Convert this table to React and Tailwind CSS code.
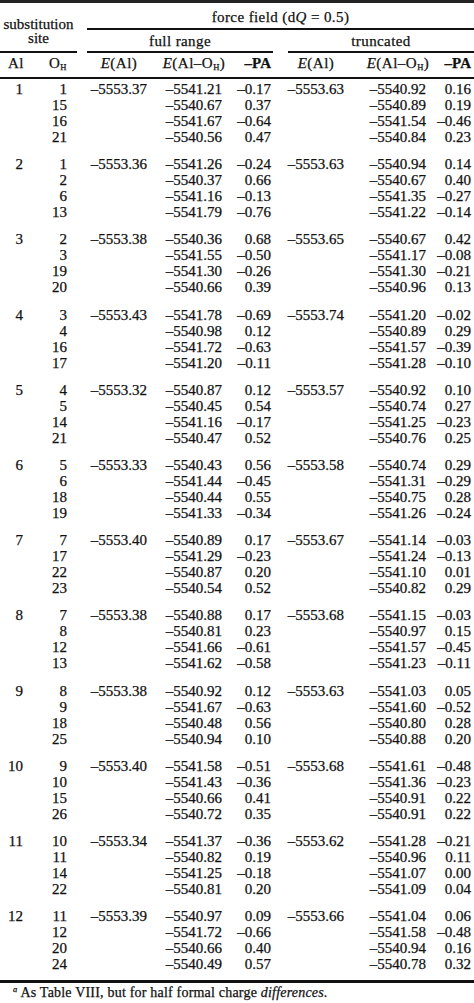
import React from "react";

// Al, E(Al) full, E(Al) truncated, rows: [O_H, E(Al-OH) full, -PA full, E(Al-OH) trunc, -PA trunc]
const groups = [
  ["1", "–5553.37", "–5553.63", [
    ["1", "–5541.21", "–0.17", "–5540.92", "0.16"],
    ["15", "–5540.67", "0.37", "–5540.89", "0.19"],
    ["16", "–5541.67", "–0.64", "–5541.54", "–0.46"],
    ["21", "–5540.56", "0.47", "–5540.84", "0.23"],
  ]],
  ["2", "–5553.36", "–5553.63", [
    ["1", "–5541.26", "–0.24", "–5540.94", "0.14"],
    ["2", "–5540.37", "0.66", "–5540.67", "0.40"],
    ["6", "–5541.16", "–0.13", "–5541.35", "–0.27"],
    ["13", "–5541.79", "–0.76", "–5541.22", "–0.14"],
  ]],
  ["3", "–5553.38", "–5553.65", [
    ["2", "–5540.36", "0.68", "–5540.67", "0.42"],
    ["3", "–5541.55", "–0.50", "–5541.17", "–0.08"],
    ["19", "–5541.30", "–0.26", "–5541.30", "–0.21"],
    ["20", "–5540.66", "0.39", "–5540.96", "0.13"],
  ]],
  ["4", "–5553.43", "–5553.74", [
    ["3", "–5541.78", "–0.69", "–5541.20", "–0.02"],
    ["4", "–5540.98", "0.12", "–5540.89", "0.29"],
    ["16", "–5541.72", "–0.63", "–5541.57", "–0.39"],
    ["17", "–5541.20", "–0.11", "–5541.28", "–0.10"],
  ]],
  ["5", "–5553.32", "–5553.57", [
    ["4", "–5540.87", "0.12", "–5540.92", "0.10"],
    ["5", "–5540.45", "0.54", "–5540.74", "0.27"],
    ["14", "–5541.16", "–0.17", "–5541.25", "–0.23"],
    ["21", "–5540.47", "0.52", "–5540.76", "0.25"],
  ]],
  ["6", "–5553.33", "–5553.58", [
    ["5", "–5540.43", "0.56", "–5540.74", "0.29"],
    ["6", "–5541.44", "–0.45", "–5541.31", "–0.29"],
    ["18", "–5540.44", "0.55", "–5540.75", "0.28"],
    ["19", "–5541.33", "–0.34", "–5541.26", "–0.24"],
  ]],
  ["7", "–5553.40", "–5553.67", [
    ["7", "–5540.89", "0.17", "–5541.14", "–0.03"],
    ["17", "–5541.29", "–0.23", "–5541.24", "–0.13"],
    ["22", "–5540.87", "0.20", "–5541.10", "0.01"],
    ["23", "–5540.54", "0.52", "–5540.82", "0.29"],
  ]],
  ["8", "–5553.38", "–5553.68", [
    ["7", "–5540.88", "0.17", "–5541.15", "–0.03"],
    ["8", "–5540.81", "0.23", "–5540.97", "0.15"],
    ["12", "–5541.66", "–0.61", "–5541.57", "–0.45"],
    ["13", "–5541.62", "–0.58", "–5541.23", "–0.11"],
  ]],
  ["9", "–5553.38", "–5553.63", [
    ["8", "–5540.92", "0.12", "–5541.03", "0.05"],
    ["9", "–5541.67", "–0.63", "–5541.60", "–0.52"],
    ["18", "–5540.48", "0.56", "–5540.80", "0.28"],
    ["25", "–5540.94", "0.10", "–5540.88", "0.20"],
  ]],
  ["10", "–5553.40", "–5553.68", [
    ["9", "–5541.58", "–0.51", "–5541.61", "–0.48"],
    ["10", "–5541.43", "–0.36", "–5541.36", "–0.23"],
    ["15", "–5540.66", "0.41", "–5540.91", "0.22"],
    ["26", "–5540.72", "0.35", "–5540.91", "0.22"],
  ]],
  ["11", "–5553.34", "–5553.62", [
    ["10", "–5541.37", "–0.36", "–5541.28", "–0.21"],
    ["11", "–5540.82", "0.19", "–5540.96", "0.11"],
    ["14", "–5541.25", "–0.18", "–5541.07", "0.00"],
    ["22", "–5540.81", "0.20", "–5541.09", "0.04"],
  ]],
  ["12", "–5553.39", "–5553.66", [
    ["11", "–5540.97", "0.09", "–5541.04", "0.06"],
    ["12", "–5541.72", "–0.66", "–5541.58", "–0.48"],
    ["20", "–5540.66", "0.40", "–5540.94", "0.16"],
    ["24", "–5540.49", "0.57", "–5540.78", "0.32"],
  ]],
];

const cols = "grid grid-cols-[29px_38px_80px_75px_49px_73px_82px_45px]";

const OH = () => (
  <span>
    O<sub className="text-[8.5px] align-baseline relative top-[2px]">H</sub>
  </span>
);

const Rule = ({ h = "h-[2px]" }) => <div className={`${h} bg-[#111]`} />;

// header centred over the right-aligned number block of a column
const Head = ({ children, w = "w-[56px]" }) => (
  <div className="flex justify-end">
    <div className={`${w} flex justify-center`}>{children}</div>
  </div>
);

export default function App() {
  return (
    <div className="w-[474px] h-[1003px] overflow-hidden bg-white text-[#111] font-['Liberation_Serif',serif] text-[15px] [-webkit-text-stroke:0.25px_#111]">
      <div className="h-[3px] bg-[#222]" />

      {/* spanner headings */}
      <div className="flex">
        <div className="w-[77px]">
          <div className="h-[48px] flex flex-col justify-end items-center pb-[6px] leading-[14px]">
            <span>substitution</span>
            <span>site</span>
          </div>
          <Rule />
        </div>
        <div className="ml-[10px] w-[387px]">
          <div className="h-[25px] pt-[6px] leading-[16px] text-center tracking-[0.4px]">
            force field (d<i>Q</i> = 0.5)
          </div>
          <Rule />
          <div className="flex justify-between">
            <div className="w-[186px]">
              <div className="h-[21px] pt-[3px] leading-[16px] text-center tracking-[0.4px]">full range</div>
              <Rule />
            </div>
            <div className="w-[186px]">
              <div className="h-[21px] pt-[3px] leading-[16px] text-center tracking-[0.4px]">truncated</div>
              <Rule />
            </div>
          </div>
        </div>
      </div>

      {/* column headings */}
      <div className={`${cols} h-[24px] pt-[2px] leading-[16px] whitespace-nowrap tracking-[0.5px]`}>
        <div className="pl-[8px]">Al</div>
        <div className="text-right"><OH /></div>
        <Head><span><i>E</i>(Al)</span></Head>
        <Head><span><i>E</i>(Al–<OH />)</span></Head>
        <div className="text-right font-bold tracking-normal">–PA</div>
        <Head><span><i>E</i>(Al)</span></Head>
        <Head><span><i>E</i>(Al–<OH />)</span></Head>
        <div className="text-right font-bold tracking-normal">–PA</div>
      </div>
      <Rule h="h-[1.5px]" />

      {/* body */}
      <div className="pt-[2.5px] flex flex-col gap-[11.2px]">
        {groups.map(([al, eAl, eAlT, rows]) => (
          <div key={al}>
            {rows.map(([o, e, pa, eT, paT], i) => (
              <div key={o + i} className={`${cols} h-[16px] leading-[16px] text-right whitespace-nowrap`}>
                <div className="pr-[6px]">{i === 0 ? al : ""}</div>
                <div>{o}</div>
                <div>{i === 0 ? eAl : ""}</div>
                <div>{e}</div>
                <div>{pa}</div>
                <div>{i === 0 ? eAlT : ""}</div>
                <div>{eT}</div>
                <div>{paT}</div>
              </div>
            ))}
          </div>
        ))}
      </div>

      <div className="mt-[8px]">
        <Rule h="h-[2.5px]" />
      </div>
      <div className="pt-[2px] pl-[13px] leading-[16px] text-[14px] tracking-[0.2px]">
        <sup className="italic text-[8.5px] mr-[3px]">a</sup>
        As Table VIII, but for half formal charge <i>differences</i>.
      </div>
    </div>
  );
}
